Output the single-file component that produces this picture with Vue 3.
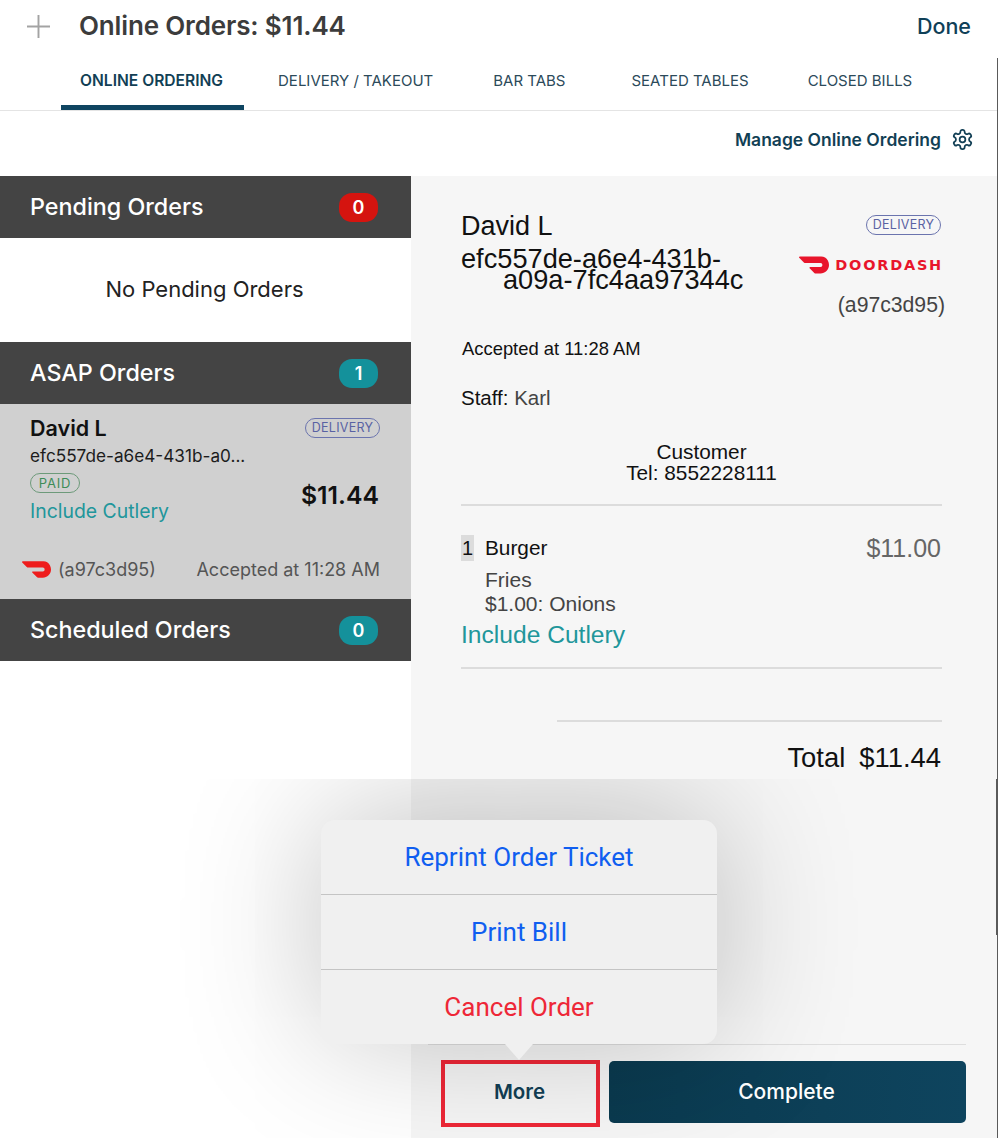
<template>
  <div class="page">
    <header class="topbar">
      <div class="title-row">
        <svg class="plus" viewBox="0 0 24 24"><path d="M12 0v24M0 12h24" /></svg>
        <h1 class="title">Online Orders: $11.44</h1>
        <a class="done">Done</a>
      </div>
      <nav class="tabs">
        <a v-for="tab in tabs" :key="tab" class="tab" :class="{ active: tab === 'ONLINE ORDERING' }">{{ tab }}</a>
      </nav>
    </header>

    <div class="manage">
      <span>Manage Online Ordering</span>
      <svg class="gear" viewBox="0 0 24 24">
        <path d="M12.22 2h-.44a2 2 0 0 0-2 2v.18a2 2 0 0 1-1 1.73l-.43.25a2 2 0 0 1-2 0l-.15-.08a2 2 0 0 0-2.73.73l-.22.38a2 2 0 0 0 .73 2.73l.15.1a2 2 0 0 1 1 1.72v.51a2 2 0 0 1-1 1.74l-.15.09a2 2 0 0 0-.73 2.73l.22.38a2 2 0 0 0 2.73.73l.15-.08a2 2 0 0 1 2 0l.43.25a2 2 0 0 1 1 1.73V20a2 2 0 0 0 2 2h.44a2 2 0 0 0 2-2v-.18a2 2 0 0 1 1-1.73l.43-.25a2 2 0 0 1 2 0l.15.08a2 2 0 0 0 2.73-.73l.22-.39a2 2 0 0 0-.73-2.73l-.15-.08a2 2 0 0 1-1-1.74v-.5a2 2 0 0 1 1-1.74l.15-.09a2 2 0 0 0 .73-2.73l-.22-.38a2 2 0 0 0-2.73-.73l-.15.08a2 2 0 0 1-2 0l-.43-.25a2 2 0 0 1-1-1.73V4a2 2 0 0 0-2-2z" />
        <circle cx="12" cy="12" r="3" />
      </svg>
    </div>

    <main class="content">
      <aside class="orders">
        <div class="group-head">
          <span>Pending Orders</span>
          <b class="count red">0</b>
        </div>
        <div class="empty">No Pending Orders</div>

        <div class="group-head">
          <span>ASAP Orders</span>
          <b class="count">1</b>
        </div>
        <div class="order-card">
          <div class="card-top">
            <div class="card-info">
              <div class="card-name">David L</div>
              <div class="card-id">efc557de-a6e4-431b-a0...</div>
              <span class="paid">PAID</span>
              <div class="card-note">Include Cutlery</div>
            </div>
            <div class="card-side">
              <span class="delivery">DELIVERY</span>
              <div class="card-price">$11.44</div>
            </div>
          </div>
          <div class="card-bottom">
            <svg class="dd small" viewBox="0 0 24 24"><path :d="ddPath" /></svg>
            <span class="card-code">(a97c3d95)</span>
            <span class="card-time">Accepted at 11:28 AM</span>
          </div>
        </div>

        <div class="group-head">
          <span>Scheduled Orders</span>
          <b class="count">0</b>
        </div>
      </aside>

      <section class="ticket">
        <div class="ticket-head">
          <div>
            <div class="ticket-name">David L</div>
            <div class="ticket-id">efc557de-a6e4-431b-<br>a09a-7fc4aa97344c</div>
          </div>
          <div class="ticket-source">
            <span class="delivery">DELIVERY</span>
            <div class="brand">
              <svg class="dd" viewBox="0 0 24 24"><path :d="ddPath" /></svg>
              <span class="brand-name">DOORDASH</span>
            </div>
            <div class="ticket-code">(a97c3d95)</div>
          </div>
        </div>

        <div class="accepted">Accepted at 11:28 AM</div>
        <div class="staff">Staff: <span>Karl</span></div>
        <div class="customer">Customer<br>Tel: 8552228111</div>

        <div class="line-item">
          <div class="item-row">
            <span class="qty">1</span>
            <span class="item-name">Burger</span>
            <span class="item-price">$11.00</span>
          </div>
          <div class="mods">Fries<br>$1.00: Onions</div>
          <div class="item-note">Include Cutlery</div>
        </div>

        <div class="total-rule"></div>
        <div class="total"><span>Total</span><span>$11.44</span></div>
      </section>
    </main>

    <footer class="actions">
      <button class="more">More</button>
      <button class="complete">Complete</button>
    </footer>

    <div class="popover-clip">
      <div class="popover">
        <div class="pop-item">Reprint Order Ticket</div>
        <div class="pop-item">Print Bill</div>
        <div class="pop-item cancel">Cancel Order</div>
      </div>
    </div>
    <div class="edge"></div>
    <div class="edge thick"></div>
  </div>
</template>

<script setup>
const tabs = ['ONLINE ORDERING', 'DELIVERY / TAKEOUT', 'BAR TABS', 'SEATED TABLES', 'CLOSED BILLS']
const ddPath = 'M23.071 8.409a6.09 6.09 0 0 0-5.396-3.228H.584A.589.589 0 0 0 .17 6.184L3.894 9.93a1.752 1.752 0 0 0 1.242.516h12.049a1.554 1.554 0 1 1 .031 3.108H8.91a.589.589 0 0 0-.415 1.003l3.725 3.747a1.75 1.75 0 0 0 1.242.516h3.757c4.887 0 8.584-5.225 5.852-10.413'
</script>

<style>
html, body {
  margin: 0;
  background: #fff;
}
</style>

<style scoped>
.page {
  position: relative;
  width: 998px;
  height: 1138px;
  overflow: hidden;
  display: flex;
  flex-direction: column;
  background: #fff;
  font-family: "Inter", "Liberation Sans", sans-serif;
}

.topbar {
  height: 111px;
  box-sizing: border-box;
  border-bottom: 1px solid #e4e4e4;
  flex: none;
}

.title-row {
  height: 52px;
  display: flex;
  align-items: center;
  padding: 0 27px;
}

.plus {
  width: 23px;
  height: 23px;
  fill: none;
  stroke: #a3a3a3;
  stroke-width: 2;
}

.title {
  margin: -2px 0 0 29px;
  font-size: 26px;
  font-weight: 600;
  color: #3c3c3c;
  letter-spacing: -0.15px;
}

.done {
  margin-left: auto;
  font-size: 21.5px;
  font-weight: 500;
  color: #0f4058;
}

.tabs {
  display: flex;
  padding-left: 61px;
}

.tab {
  height: 58px;
  box-sizing: border-box;
  border-bottom: 5px solid transparent;
  padding: 20px 19px 0;
  margin-right: 22px;
  font-size: 15px;
  line-height: 18px;
  color: #2c4a5a;
  white-space: nowrap;
}

.tab.active {
  margin-right: 15px;
  padding-right: 21px;
  font-size: 15.6px;
  font-weight: 600;
  color: #123f55;
  border-bottom-color: #0f4561;
}

.tab:nth-child(3) {
  margin-right: 28px;
}

.tab:nth-child(4) {
  margin-right: 21px;
}

.manage {
  height: 65px;
  box-sizing: border-box;
  padding: 0 24px 8px 0;
  flex: none;
  display: flex;
  align-items: center;
  justify-content: flex-end;
  gap: 10px;
  font-size: 17.5px;
  font-weight: 600;
  color: #123f55;
}

.gear {
  width: 23px;
  height: 23px;
  fill: none;
  stroke: #123f55;
  stroke-width: 1.8;
}

.content {
  flex: 1;
  display: flex;
  min-height: 0;
}

.orders {
  width: 411px;
  flex: none;
}

.group-head {
  height: 62px;
  background: #444;
  color: #fff;
  display: flex;
  align-items: center;
  justify-content: space-between;
  padding: 0 33px 0 30px;
  font-size: 23.3px;
  font-weight: 500;
}

.group-head span {
  margin-bottom: 2px;
}

.count {
  width: 39px;
  height: 29px;
  border-radius: 13px;
  background: #14919b;
  color: #fff;
  display: flex;
  align-items: center;
  justify-content: center;
  font-size: 18px;
  font-weight: 600;
}

.count.red {
  background: #d5140f;
}

.empty {
  height: 104px;
  box-sizing: border-box;
  padding: 0 2px 2px 0;
  display: flex;
  align-items: center;
  justify-content: center;
  font-size: 22px;
  color: #222;
}

.order-card {
  height: 195px;
  box-sizing: border-box;
  padding: 11px 31px 0 30px;
  background: #d0d0d0;
}

.card-top {
  display: flex;
  justify-content: space-between;
  height: 139px;
}

.card-name {
  font-size: 21.5px;
  font-weight: 600;
  line-height: 27px;
  color: #111;
}

.card-id {
  font-size: 17.2px;
  line-height: 27px;
  color: #1c1c1c;
}

.paid {
  display: block;
  width: 50px;
  height: 20px;
  box-sizing: border-box;
  margin-top: 4px;
  border: 1px solid #6d9a7a;
  border-radius: 10px;
  text-align: center;
  font-size: 13px;
  line-height: 18px;
  letter-spacing: 0.8px;
  color: #3d8c58;
}

.card-note {
  margin-top: 3px;
  font-size: 19.4px;
  line-height: 30px;
  color: #21969b;
}

.card-side {
  display: flex;
  flex-direction: column;
  align-items: flex-end;
  padding-top: 3px;
}

.delivery {
  display: inline-block;
  width: 75px;
  height: 20px;
  box-sizing: border-box;
  border: 1px solid #6b74ae;
  border-radius: 10px;
  text-align: center;
  font-size: 12.5px;
  line-height: 18px;
  letter-spacing: 0.3px;
  color: #5962a3;
}

.card-price {
  margin-top: 42px;
  margin-right: 1px;
  font-size: 24.8px;
  font-weight: 600;
  color: #111;
}

.card-bottom {
  display: flex;
  align-items: center;
  height: 30px;
  margin-left: -8px;
  font-size: 18px;
  color: #555;
}

.dd {
  width: 30px;
  height: 30px;
  fill: #e8152b;
  flex: none;
}

.dd.small {
  width: 29px;
  height: 29px;
  fill: #ee1c1c;
}

.card-code {
  margin-left: 7px;
}

.card-time {
  margin-left: auto;
}

.ticket {
  flex: 1;
  box-sizing: border-box;
  background: #f6f6f6;
  padding: 32px 56px 0 50px;
  font-family: "Liberation Sans", Arial, sans-serif;
  color: #111;
}

.ticket-head {
  display: flex;
  justify-content: space-between;
  height: 129px;
}

.ticket-name {
  font-size: 27px;
  line-height: 36px;
}

.ticket-id {
  padding-left: 42px;
  text-indent: -42px;
  font-size: 27.2px;
  line-height: 21px;
  margin-top: 4px;
}

.ticket-source {
  display: flex;
  flex-direction: column;
  align-items: flex-end;
  margin-right: 1px;
  padding-top: 7px;
}

.ticket-source .delivery {
  font-family: "Inter", "Liberation Sans", sans-serif;
}

.brand {
  display: flex;
  align-items: center;
  gap: 6px;
  margin-top: 14px;
  height: 32px;
}

.brand-name {
  font-family: "DejaVu Sans", "Liberation Sans", sans-serif;
  font-size: 14.5px;
  font-weight: 700;
  letter-spacing: 1.75px;
  margin-right: -2px;
  color: #e8152b;
}

.ticket-code {
  margin-right: -4px;
  margin-top: 12px;
  font-size: 21.2px;
  color: #444;
}

.accepted {
  font-size: 18.4px;
  line-height: 24px;
  margin-left: 1px;
}

.staff {
  margin-top: 25px;
  font-size: 20.5px;
  line-height: 24px;
}

.staff span {
  color: #444;
}

.customer {
  margin-top: 31px;
  padding-bottom: 21px;
  text-align: center;
  font-size: 20.8px;
  line-height: 21px;
  border-bottom: 2px solid #dcdcdc;
}

.line-item {
  padding-top: 29px;
  height: 163px;
  box-sizing: border-box;
  border-bottom: 2px solid #dcdcdc;
}

.item-row {
  display: flex;
  align-items: center;
  height: 26px;
}

.qty {
  width: 13px;
  height: 26px;
  background: #dcdcdc;
  text-align: center;
  font-size: 20px;
  line-height: 26px;
  margin-right: 11px;
}

.item-name {
  font-size: 20.8px;
}

.item-price {
  margin-left: auto;
  margin-right: 1px;
  font-size: 25px;
  color: #666;
}

.mods {
  margin-top: 7px;
  padding-left: 24px;
  font-size: 21px;
  line-height: 24px;
  color: #444;
}

.item-note {
  margin-top: 4px;
  font-size: 24.6px;
  line-height: 30px;
  color: #21969b;
}

.total-rule {
  margin: 51px 0 0 96px;
  border-top: 2px solid #dcdcdc;
}

.total {
  margin-top: 19px;
  display: flex;
  justify-content: flex-end;
  gap: 14px;
  font-size: 27.4px;
  line-height: 34px;
  padding-right: 1px;
}

.actions {
  position: absolute;
  left: 428px;
  right: 32px;
  top: 1044px;
  border-top: 1px solid #dedede;
  display: flex;
  padding: 15px 0 0 13px;
  gap: 9px;
}

.more {
  width: 159px;
  height: 67px;
  padding: 0 2px 5px 0;
  background: transparent;
  border: 4px solid #ee2737;
  font-family: "Inter", "Liberation Sans", sans-serif;
  font-size: 20.5px;
  font-weight: 600;
  color: #123f55;
}

.complete {
  flex: 1;
  height: 62px;
  margin-top: 1px;
  padding: 0 2px 1px 0;
  border: 0;
  border-radius: 5px;
  background: linear-gradient(90deg, #0a3a4f, #0d4058 60%, #0e445e);
  color: #fff;
  font-family: "Inter", "Liberation Sans", sans-serif;
  font-size: 21px;
  font-weight: 500;
}

.popover-clip {
  position: absolute;
  left: 170px;
  top: 779px;
  width: 828px;
  height: 359px;
  overflow: hidden;
  pointer-events: none;
}

.popover {
  position: absolute;
  left: 151px;
  top: 41px;
  width: 396px;
  background: #f0f0f0;
  border-radius: 14px;
  box-shadow: 0 -8px 140px rgba(0, 0, 0, 0.24);
}

.popover::after {
  content: "";
  position: absolute;
  left: 184px;
  bottom: -16px;
  border-left: 14px solid transparent;
  border-right: 14px solid transparent;
  border-top: 16px solid #f0f0f0;
}

.pop-item {
  height: 75px;
  box-sizing: border-box;
  display: flex;
  align-items: center;
  justify-content: center;
  font-family: "Roboto", "Liberation Sans", sans-serif;
  font-size: 26px;
  color: #0f5ef0;
}

.pop-item:first-child {
  height: 74px;
}

.pop-item + .pop-item {
  border-top: 1px solid #c4c4c4;
}

.pop-item.cancel {
  color: #ee2737;
}

.edge {
  position: absolute;
  left: 997px;
  top: 58px;
  bottom: 0;
  width: 1px;
  background: #5a5a5a;
}

.edge.thick {
  left: 996px;
  top: 779px;
  bottom: auto;
  height: 156px;
  width: 2px;
}
</style>
